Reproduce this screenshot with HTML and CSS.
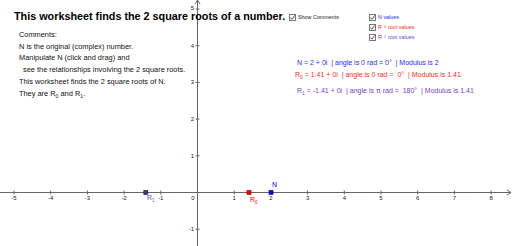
FILE: index.html
```html
<!DOCTYPE html>
<html>
<head>
<meta charset="utf-8">
<link rel="stylesheet" href="styles.css">
</head>
<body>
<div class="applet">
  <svg class="graph" width="512" height="246" viewBox="0 0 512 246">
    <g class="axes" stroke="#666" stroke-width="1">
      <line x1="0" y1="192.5" x2="511" y2="192.5"/>
      <line x1="197.5" y1="0" x2="197.5" y2="246"/>
      <polyline points="507,190 511,192.5 507,195" fill="none"/>
      <polyline points="195,4 197.5,0 200,4" fill="none"/>
    </g>
    <g class="ticks" stroke="#666" stroke-width="1">
      <line x1="14" y1="190.5" x2="14" y2="194.5"/>
      <line x1="50.7" y1="190.5" x2="50.7" y2="194.5"/>
      <line x1="87.4" y1="190.5" x2="87.4" y2="194.5"/>
      <line x1="124.1" y1="190.5" x2="124.1" y2="194.5"/>
      <line x1="160.8" y1="190.5" x2="160.8" y2="194.5"/>
      <line x1="234.2" y1="190.5" x2="234.2" y2="194.5"/>
      <line x1="270.9" y1="190.5" x2="270.9" y2="194.5"/>
      <line x1="307.6" y1="190.5" x2="307.6" y2="194.5"/>
      <line x1="344.3" y1="190.5" x2="344.3" y2="194.5"/>
      <line x1="381" y1="190.5" x2="381" y2="194.5"/>
      <line x1="417.7" y1="190.5" x2="417.7" y2="194.5"/>
      <line x1="454.4" y1="190.5" x2="454.4" y2="194.5"/>
      <line x1="491.1" y1="190.5" x2="491.1" y2="194.5"/>
      <line x1="195.5" y1="9" x2="199.5" y2="9"/>
      <line x1="195.5" y1="45.7" x2="199.5" y2="45.7"/>
      <line x1="195.5" y1="82.4" x2="199.5" y2="82.4"/>
      <line x1="195.5" y1="119.1" x2="199.5" y2="119.1"/>
      <line x1="195.5" y1="155.8" x2="199.5" y2="155.8"/>
      <line x1="195.5" y1="229.2" x2="199.5" y2="229.2"/>
    </g>
    <g class="tick-labels">
      <text x="14" y="200" text-anchor="middle">-5</text>
      <text x="50.7" y="200" text-anchor="middle">-4</text>
      <text x="87.4" y="200" text-anchor="middle">-3</text>
      <text x="124.1" y="200" text-anchor="middle">-2</text>
      <text x="160.8" y="200" text-anchor="middle">-1</text>
      <text x="193" y="200" text-anchor="middle">0</text>
      <text x="234.2" y="200" text-anchor="middle">1</text>
      <text x="270.9" y="200" text-anchor="middle">2</text>
      <text x="307.6" y="200" text-anchor="middle">3</text>
      <text x="344.3" y="200" text-anchor="middle">4</text>
      <text x="381" y="200" text-anchor="middle">5</text>
      <text x="417.7" y="200" text-anchor="middle">6</text>
      <text x="454.4" y="200" text-anchor="middle">7</text>
      <text x="491.1" y="200" text-anchor="middle">8</text>
      <text x="194" y="10" text-anchor="end">5</text>
      <text x="194" y="47.7" text-anchor="end">4</text>
      <text x="194" y="84.4" text-anchor="end">3</text>
      <text x="194" y="121.1" text-anchor="end">2</text>
      <text x="194" y="157.8" text-anchor="end">1</text>
      <text x="194" y="231.2" text-anchor="end">-1</text>
    </g>
    <g class="points">
      <rect x="143.8" y="190.5" width="4" height="4" fill="#3f2f8f" stroke="#222" stroke-width="0.6"/>
      <rect x="247" y="190.5" width="4" height="4" fill="#ff0000" stroke="#800" stroke-width="0.6"/>
      <rect x="269" y="190.5" width="4" height="4" fill="#0000ff" stroke="#000080" stroke-width="0.6"/>
    </g>
    <g class="point-labels">
      <text x="147" y="200" fill="#7f3fbf">R<tspan dy="1.5" font-size="4.5">1</tspan></text>
      <text x="250" y="202" fill="#ff0000">R<tspan dy="1.5" font-size="4.5">0</tspan></text>
      <text x="272" y="187" fill="#0000ff">N</text>
    </g>
  </svg>

  <h1 class="title">This worksheet finds the 2 square roots of a number.</h1>

  <div class="comments">
    <p>Comments:</p>
    <p>N is the original (complex) number.</p>
    <p>Manipulate N (click and drag) and</p>
    <p class="indent">see the relationships involving the 2 square roots.</p>
    <p>This worksheet finds the 2 square roots of N.</p>
    <p>They are R<sub>0</sub> and R<sub>1</sub>.</p>
  </div>

  <label class="check show-comments"><span class="box"><svg width="7" height="7" viewBox="0 0 7 7"><polyline points="1.3,3.6 2.9,5.2 5.8,1.4" fill="none" stroke="#333" stroke-width="0.9"/></svg></span>Show Comments</label>

  <div class="checks">
    <label class="check blue"><span class="box"><svg width="7" height="7" viewBox="0 0 7 7"><polyline points="1.3,3.6 2.9,5.2 5.8,1.4" fill="none" stroke="#333" stroke-width="0.9"/></svg></span>N values</label>
    <label class="check red"><span class="box"><svg width="7" height="7" viewBox="0 0 7 7"><polyline points="1.3,3.6 2.9,5.2 5.8,1.4" fill="none" stroke="#333" stroke-width="0.9"/></svg></span>R<sub>0</sub> root values</label>
    <label class="check purple"><span class="box"><svg width="7" height="7" viewBox="0 0 7 7"><polyline points="1.3,3.6 2.9,5.2 5.8,1.4" fill="none" stroke="#333" stroke-width="0.9"/></svg></span>R<sub>1</sub> root values</label>
  </div>

  <div class="values">
    <p class="blue">N = 2 + 0i &nbsp;| angle is 0 rad = 0° &nbsp;| Modulus is 2</p>
    <p class="red">R<sub>0</sub> = 1.41 + 0i &nbsp;| angle is 0 rad = &nbsp;0° &nbsp;| Modulus is 1.41</p>
    <p class="purple">R<sub>1</sub> = -1.41 + 0i &nbsp;| angle is π rad = &nbsp;180° &nbsp;| Modulus is 1.41</p>
  </div>
</div>
</body>
</html>
```

FILE: styles.css
```css
html, body {
  margin: 0;
  padding: 0;
  background: #fff;
}
body {
  font-family: "Liberation Sans", Arial, sans-serif;
  color: #000;
}
.applet {
  position: relative;
  width: 512px;
  height: 246px;
  overflow: hidden;
  background: #fff;
}
.graph {
  position: absolute;
  left: 0;
  top: 0;
  display: block;
}
.tick-labels text {
  font-family: "Liberation Sans", Arial, sans-serif;
  font-size: 6px;
  fill: #222;
}
.point-labels text {
  font-family: "Liberation Sans", Arial, sans-serif;
  font-size: 7px;
}
.title {
  position: absolute;
  left: 14px;
  top: 10px;
  margin: 0;
  font-size: 10.8px;
  font-weight: bold;
  line-height: 13px;
  white-space: nowrap;
  color: #000;
}
.comments {
  position: absolute;
  left: 19px;
  top: 29px;
  font-size: 7.4px;
  line-height: 11.7px;
  color: #111;
}
.comments p {
  margin: 0;
  white-space: nowrap;
}
.comments .indent {
  padding-left: 4px;
}
sub {
  font-size: 70%;
  vertical-align: -2px;
  line-height: 0;
}
.check {
  display: flex;
  align-items: center;
  gap: 2px;
  font-size: 5.4px;
  white-space: nowrap;
  line-height: 10px;
}
.box {
  display: inline-flex;
  width: 7px;
  height: 7px;
  box-sizing: border-box;
  border: 1px solid #777;
  background: #fff;
  align-items: center;
  justify-content: center;
}
.box svg {
  display: block;
  flex: none;
}
.show-comments {
  position: absolute;
  left: 289px;
  top: 12px;
  color: #222;
}
.checks {
  position: absolute;
  left: 369px;
  top: 12px;
  display: flex;
  flex-direction: column;
}
.blue { color: #1f1fff; }
.red { color: #ff1f1f; }
.purple { color: #7a3dbf; }
.values {
  position: absolute;
  left: 297px;
  top: 57px;
  font-size: 7px;
  display: flex;
  flex-direction: column;
  gap: 0;
}
.values p {
  margin: 0;
  white-space: nowrap;
  line-height: 12px;
}
.values .red { margin-left: -2px; }
.values .purple { margin-top: 4px; }
```
